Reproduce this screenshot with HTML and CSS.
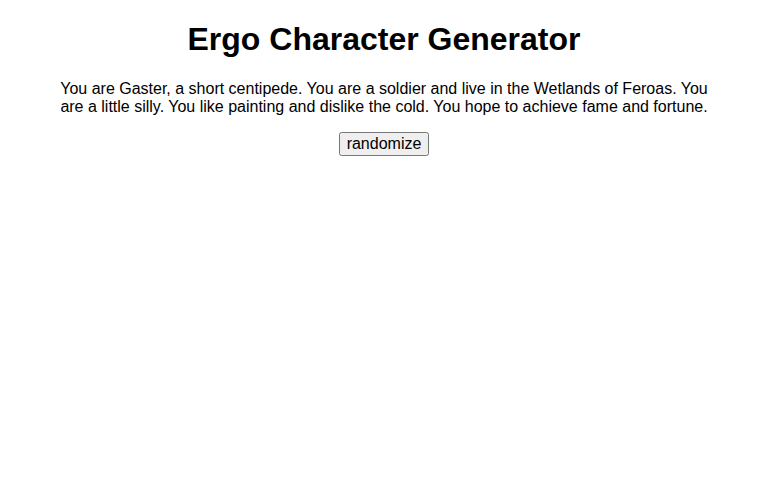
FILE: index.html
```html
<!DOCTYPE html>
<html lang="en">
	<head>
		<meta charset="utf-8" />
		<title>Ergo Character Generator</title>
		<link rel="stylesheet" href="styles.css">
	</head>
	<body>
		<div class="gerador">
			<h1>Ergo Character Generator</h1>
			<p id="descricao">You are Gaster, a short centipede. You are a soldier and live in the Wetlands of Feroas. You are a little silly. You like painting and dislike the cold. You hope to achieve fame and fortune.</p>
			<button id="sortear">randomize</button>
		</div>
	</body>
</html>
```

FILE: styles.css
```css
body{font-family: "Liberation Sans", Arial, sans-serif; text-align: center; margin: 0 8px 8px;}
.gerador{max-width: 660px; margin: 0 auto;}
h1{font-size: 32px;}
#descricao{font-size: 16px;}
#sortear{font: 16px "Liberation Sans", Arial, sans-serif; padding: 1px 6px; cursor: pointer;}
```
